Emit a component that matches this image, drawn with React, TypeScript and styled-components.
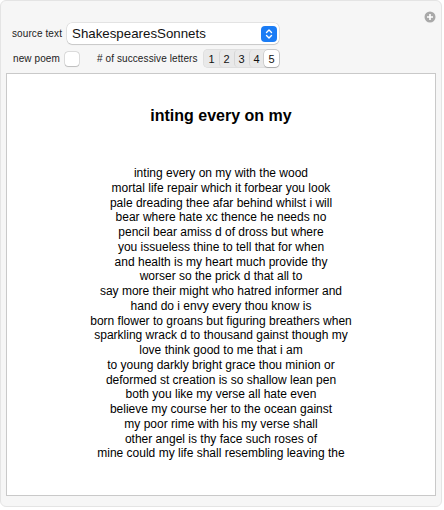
import React from "react";
import styled, { createGlobalStyle } from "styled-components";

const Global = createGlobalStyle`
  html, body { margin: 0; padding: 0; background: #ffffff; }
  body { font-family: "Liberation Sans", Arial, sans-serif; }
`;

const Panel = styled.div`
  position: relative;
  box-sizing: border-box;
  width: 442px;
  height: 507px;
  margin: 0;
  background: #f6f6f6;
  border: 1px solid #e4e4e4;
  border-radius: 6px;
  padding: 22px 5px 10px 5px;
  display: flex;
  flex-direction: column;
`;

const PlusIcon = styled.div`
  position: absolute;
  right: 5px;
  top: 8px;
  width: 12px;
  height: 12px;
`;

const Controls = styled.div`
  display: flex;
  flex-direction: column;
  gap: 5px;
  padding-left: 6px;
`;

const Row = styled.div`
  display: flex;
  align-items: center;
`;

const Label = styled.span<{ $ml?: number; $mr?: number }>`
  font-size: 10px;
  color: #222;
  margin-left: ${(p) => p.$ml ?? 0}px;
  margin-right: ${(p) => p.$mr ?? 0}px;
  letter-spacing: 0.1px;
`;

const Select = styled.div`
  box-sizing: border-box;
  width: 212px;
  height: 21px;
  margin-left: -1px;
  background: #fff;
  border-radius: 5px;
  box-shadow: 0 0 0 0.5px rgba(0, 0, 0, 0.15), 0 1px 1px rgba(0, 0, 0, 0.12);
  display: flex;
  align-items: center;
  justify-content: space-between;
  padding: 0 2px 0 5px;
  font-size: 13.3px;
  color: #111;
`;

const SelectArrow = styled.div`
  width: 16px;
  height: 16px;
  border-radius: 4px;
  background: #1a7cf5;
  display: flex;
  align-items: center;
  justify-content: center;
`;

const Checkbox = styled.div`
  box-sizing: border-box;
  width: 14px;
  height: 14px;
  background: #fff;
  border-radius: 3px;
  box-shadow: 0 0 0 0.5px rgba(0, 0, 0, 0.2), 0 0.5px 1px rgba(0, 0, 0, 0.15);
`;

const Segmented = styled.div`
  display: flex;
  align-items: center;
  height: 19px;
  padding: 0 1px;
  background: #e9e9e9;
  border-radius: 5px;
  box-shadow: inset 0 0 0 0.5px rgba(0, 0, 0, 0.08);
`;

const Seg = styled.div<{ $active?: boolean; $divider?: boolean }>`
  position: relative;
  width: 15px;
  height: 17px;
  display: flex;
  align-items: center;
  justify-content: center;
  font-size: 11px;
  color: #111;
  border-radius: 4px;
  background: ${(p) => (p.$active ? "#fff" : "transparent")};
  box-shadow: ${(p) =>
    p.$active ? "0 0 0 0.5px rgba(0,0,0,0.2), 0 1px 1px rgba(0,0,0,0.15)" : "none"};
  border-left: ${(p) => (p.$divider ? "1px solid #d6d6d6" : "1px solid transparent")};
  box-sizing: border-box;
`;

const Output = styled.div`
  margin-top: 5px;
  flex: 1;
  background: #fff;
  border: 1px solid #c9c9c9;
  display: flex;
  flex-direction: column;
  align-items: center;
  color: #000;
`;

const Title = styled.div`
  margin-top: 33px;
  font-size: 16px;
  font-weight: bold;
`;

const Poem = styled.div`
  margin-top: 41px;
  text-align: center;
  font-size: 12px;
  line-height: 14.75px;
`;

const lines = [
  "inting every on my with the wood",
  "mortal life repair which it forbear you look",
  "pale dreading thee afar behind whilst i will",
  "bear where hate xc thence he needs no",
  "pencil bear amiss d of dross but where",
  "you issueless thine to tell that for when",
  "and health is my heart much provide thy",
  "worser so the prick d that all to",
  "say more their might who hatred informer and",
  "hand do i envy every thou know is",
  "born flower to groans but figuring breathers when",
  "sparkling wrack d to thousand gainst though my",
  "love think good to me that i am",
  "to young darkly bright grace thou minion or",
  "deformed st creation is so shallow lean pen",
  "both you like my verse all hate even",
  "believe my course her to the ocean gainst",
  "my poor rime with his my verse shall",
  "other angel is thy face such roses of",
  "mine could my life shall resembling leaving the",
];

export default function App() {
  return (
    <>
      <Global />
      <Panel>
        <PlusIcon>
          <svg width="12" height="12" viewBox="0 0 12 12">
            <circle cx="6" cy="6" r="5.5" fill="#a9a9a9" />
            <path d="M6 3v6M3 6h6" stroke="#fff" strokeWidth="1.6" />
          </svg>
        </PlusIcon>
        <Controls>
          <Row>
            <Label $mr={6}>source text</Label>
            <Select>
              <span>ShakespearesSonnets</span>
              <SelectArrow>
                <svg width="10" height="12" viewBox="0 0 10 12">
                  <path
                    d="M2.5 4.5L5 2l2.5 2.5M2.5 7.5L5 10l2.5-2.5"
                    stroke="#fff"
                    strokeWidth="1.4"
                    fill="none"
                    strokeLinecap="round"
                    strokeLinejoin="round"
                  />
                </svg>
              </SelectArrow>
            </Select>
          </Row>
          <Row>
            <Label $ml={1} $mr={5}>new poem</Label>
            <Checkbox />
            <Label $ml={18} $mr={5}># of successive letters</Label>
            <Segmented>
              <Seg>1</Seg>
              <Seg $divider>2</Seg>
              <Seg $divider>3</Seg>
              <Seg $divider>4</Seg>
              <Seg $active>5</Seg>
            </Segmented>
          </Row>
        </Controls>
        <Output>
          <Title>inting every on my</Title>
          <Poem>
            {lines.map((l, i) => (
              <div key={i}>{l}</div>
            ))}
          </Poem>
        </Output>
      </Panel>
    </>
  );
}
